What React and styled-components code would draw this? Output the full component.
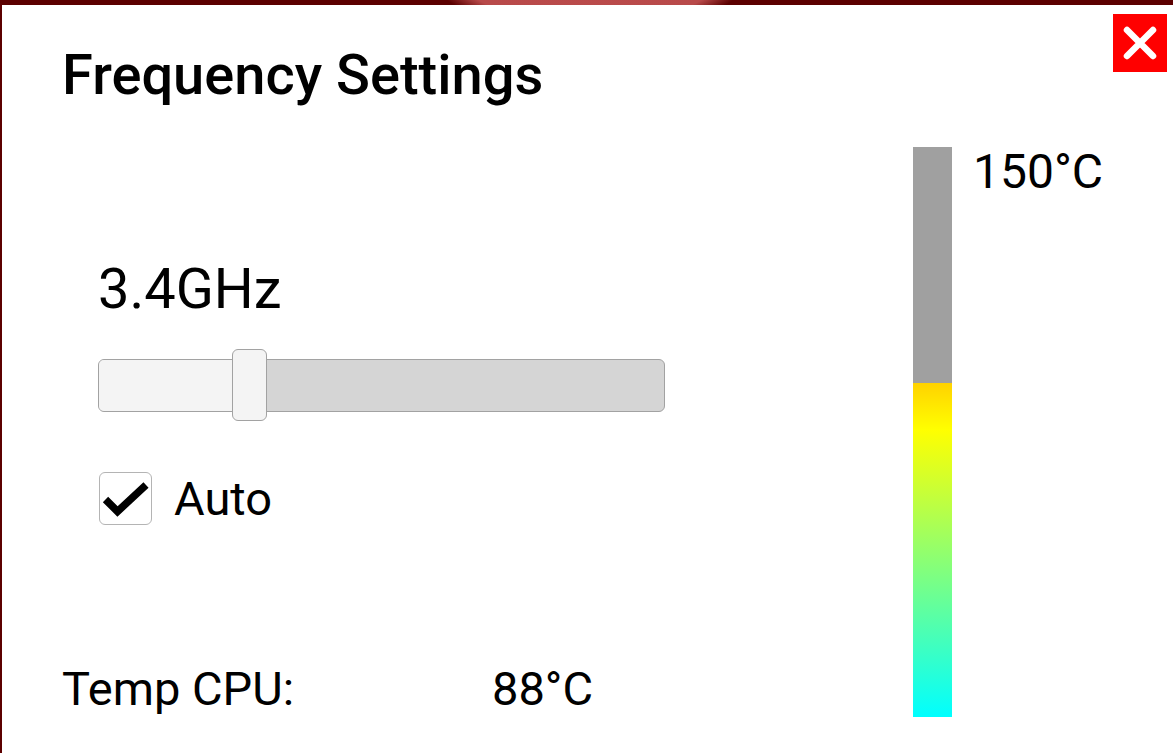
import React from 'react'
import styled, { createGlobalStyle } from 'styled-components'

const GlobalStyle = createGlobalStyle`
  html, body {
    margin: 0;
    padding: 0;
    overflow: hidden;
  }

  body {
    background: radial-gradient(ellipse 150px 40px at 590px -12px, #bb4b4b 0%, #b84a4a 80%, rgba(92, 0, 0, 0) 100%), #5c0000;
    font-family: Roboto, "Liberation Sans", sans-serif;
    color: #000;
  }
`

const freq = { value: 3.4, min: 2.0, max: 7.25 }
const temp = { current: 88, max: 150 }

export default function App() {
  const sliderPos = (freq.value - freq.min) / (freq.max - freq.min)
  const coldPart = temp.current / temp.max

  return (
    <Screen>
      <GlobalStyle />
      <Dialog>
        <CloseButton aria-label="Close">
          <svg width="34" height="34" viewBox="0 0 34 34">
            <path d="M4 4 L30 30 M30 4 L4 30" stroke="#fff" strokeWidth="6.5" strokeLinecap="round" />
          </svg>
        </CloseButton>

        <MainColumn>
          <Title>Frequency Settings</Title>

          <Controls>
            <FreqLabel>{freq.value.toFixed(1)}GHz</FreqLabel>

            <Slider>
              <Track>
                <TrackFill style={{ width: `${sliderPos * 100}%` }} />
              </Track>
              <Thumb style={{ left: `calc(${sliderPos * 100}% - 17px)` }} />
            </Slider>

            <CheckRow>
              <CheckBox>
                <svg width="53" height="53" viewBox="0 0 53 53">
                  <path d="M6.5 27.5 L18.5 39.5 L47 13" fill="none" stroke="#000" strokeWidth="7.5" strokeLinejoin="miter" />
                </svg>
              </CheckBox>
              <CheckText>Auto</CheckText>
            </CheckRow>
          </Controls>

          <TempRow>
            <span>Temp CPU:</span>
            <span>{temp.current}°C</span>
          </TempRow>
        </MainColumn>

        <GaugeColumn>
          <Gauge>
            <GaugeEmpty />
            <GaugeLevel style={{ height: `${coldPart * 100}%` }} />
          </Gauge>
          <GaugeLabel>{temp.max}°C</GaugeLabel>
        </GaugeColumn>
      </Dialog>
    </Screen>
  )
}

const Screen = styled.div`
  width: 1173px;
  height: 753px;
  box-sizing: border-box;
  padding: 5px 0 0 2px;
`

const Dialog = styled.div`
  position: relative;
  height: 748px;
  background: #fff;
  display: flex;
  flex-direction: row;
`

const CloseButton = styled.button`
  position: absolute;
  top: 9px;
  right: 6px;
  width: 54px;
  height: 58px;
  padding: 0;
  border: none;
  background: #ff0000;
  display: flex;
  align-items: center;
  justify-content: center;
  cursor: pointer;
`

const MainColumn = styled.div`
  width: 911px;
  box-sizing: border-box;
  padding: 42px 0 41px 60px;
  display: flex;
  flex-direction: column;
`

const Title = styled.h1`
  margin: 0;
  font-size: 56px;
  font-weight: 500;
  line-height: 1;
`

const Controls = styled.div`
  margin: 159px 0 0 36px;
  display: flex;
  flex-direction: column;
`

const FreqLabel = styled.div`
  font-size: 56px;
  line-height: 1;
  margin-top: -1px;
`

const Slider = styled.div`
  position: relative;
  width: 567px;
  height: 72px;
  margin-top: 32px;
  display: flex;
  align-items: center;
`

const Track = styled.div`
  width: 100%;
  height: 53px;
  box-sizing: border-box;
  border: 1px solid #a2a2a2;
  border-radius: 6px;
  background: #d5d5d5;
  overflow: hidden;
`

const TrackFill = styled.div`
  height: 100%;
  background: #f4f4f4;
`

const Thumb = styled.div`
  position: absolute;
  top: 0;
  width: 35px;
  height: 72px;
  box-sizing: border-box;
  border: 1px solid #a2a2a2;
  border-radius: 6px;
  background: #f4f4f4;
`

const CheckRow = styled.label`
  margin-top: 51px;
  display: flex;
  align-items: center;
  gap: 22px;
`

const CheckBox = styled.span`
  width: 53px;
  height: 53px;
  margin-left: 1px;
  box-sizing: border-box;
  border: 1.5px solid #b4b4b4;
  border-radius: 6px;
  background: #fff;
  display: flex;
  align-items: center;
  justify-content: center;

  svg {
    flex: none;
  }
`

const CheckText = styled.span`
  font-size: 47px;
  line-height: 1;
`

const TempRow = styled.div`
  margin-top: auto;
  display: grid;
  grid-template-columns: 430px auto;
  font-size: 47px;
  line-height: 1;
`

const GaugeColumn = styled.div`
  padding-top: 142px;
  display: flex;
  flex-direction: row;
  align-items: flex-start;
  gap: 21px;
`

const Gauge = styled.div`
  width: 39px;
  height: 570px;
  display: flex;
  flex-direction: column;
`

const GaugeEmpty = styled.div`
  flex: 1;
  background: #a0a0a0;
`

const GaugeLevel = styled.div`
  background: linear-gradient(to bottom, #ffd200 0%, #ffff00 14%, #00ffff 100%);
`

const GaugeLabel = styled.div`
  font-size: 48px;
  line-height: 1;
  margin-top: 1px;
`
